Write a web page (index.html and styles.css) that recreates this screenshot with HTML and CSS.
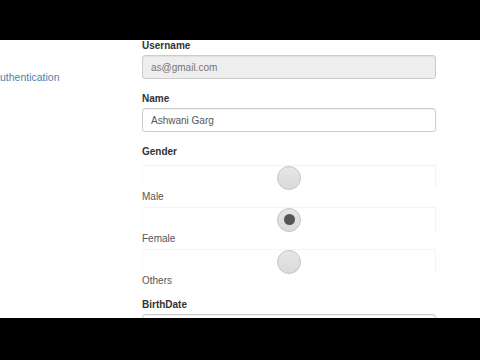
FILE: index.html
```html
<!DOCTYPE html>
<html lang="en">
<head>
    <meta charset="UTF-8">
    <meta name="viewport" content="width=device-width, initial-scale=1.0">
    <title>Profile</title>
    <link rel="stylesheet" href="styles.css">
</head>
<body>
    <div class="screen">
        <div class="letterbox top"></div>
        <div class="view">
            <div class="sidebar">
                <a href="#" class="side-link">Authentication</a>
            </div>
            <form class="profile-form">
                <div class="form-group">
                    <label class="field-label">Username</label>
                    <input type="text" class="form-control" value="as@gmail.com" disabled>
                </div>
                <div class="form-group">
                    <label class="field-label">Name</label>
                    <input type="text" class="form-control" value="Ashwani Garg">
                </div>
                <div class="form-group radio-group">
                    <label class="field-label">Gender</label>
                    <div class="radio-list">
                        <div class="radio-box"><span class="radio"></span></div>
                        <div class="radio-label">Male</div>
                        <div class="radio-box"><span class="radio checked"></span></div>
                        <div class="radio-label">Female</div>
                        <div class="radio-box"><span class="radio"></span></div>
                        <div class="radio-label">Others</div>
                    </div>
                </div>
                <div class="form-group">
                    <label class="field-label">BirthDate</label>
                    <input type="text" class="form-control" value="">
                </div>
            </form>
        </div>
        <div class="letterbox bottom"></div>
    </div>
</body>
</html>
```

FILE: styles.css
```css
body {
    margin: 0;
    background: #000;
    font-family: "Liberation Sans", Arial, sans-serif;
}
.screen {
    width: 480px;
    height: 360px;
    display: flex;
    flex-direction: column;
}
.letterbox {
    background: #000;
}
.letterbox.top {
    height: 40px;
}
.letterbox.bottom {
    height: 42px;
}
.view {
    height: 278px;
    overflow: hidden;
    background: #fff;
    display: flex;
}
.sidebar {
    width: 142px;
    padding-top: 30px;
    overflow: hidden;
}
.side-link {
    display: block;
    font-size: 10.5px;
    line-height: 14px;
    color: #4f80aa;
    text-decoration: none;
    text-indent: -7px;
}
.profile-form {
    width: 294px;
}
.form-group {
    margin-bottom: 14px;
}
.field-label {
    display: block;
    font-size: 10px;
    font-weight: bold;
    line-height: 12px;
    color: #333;
    margin-bottom: 3px;
}
.form-control {
    display: block;
    box-sizing: border-box;
    width: 100%;
    height: 24px;
    margin: 0;
    padding: 0 8px;
    font-family: inherit;
    font-size: 10px;
    color: #555;
    background: #fff;
    border: 1px solid #ccc;
    border-radius: 3px;
    box-shadow: inset 0 1px 1px rgba(0, 0, 0, 0.06);
}
.form-control:disabled {
    background: #eee;
    color: #777;
}
.radio-group {
    margin-bottom: 8px;
}
.radio-group .field-label {
    margin-bottom: 7px;
}
.radio-box {
    height: 24px;
    box-sizing: border-box;
    border: 1px solid #f3f3f3;
    border-bottom: none;
    border-left-color: #fafafa;
    display: flex;
    justify-content: center;
    align-items: center;
}
.radio {
    width: 24px;
    height: 24px;
    box-sizing: border-box;
    border-radius: 50%;
    border: 1px solid #c4c4c4;
    background: linear-gradient(#e6e6e6, #dadada);
    display: flex;
    justify-content: center;
    align-items: center;
}
.radio.checked::after {
    content: "";
    width: 11px;
    height: 11px;
    border-radius: 50%;
    background: #555;
}
.radio-label {
    height: 18px;
    font-size: 10px;
    line-height: 16px;
    color: #555;
}
```
